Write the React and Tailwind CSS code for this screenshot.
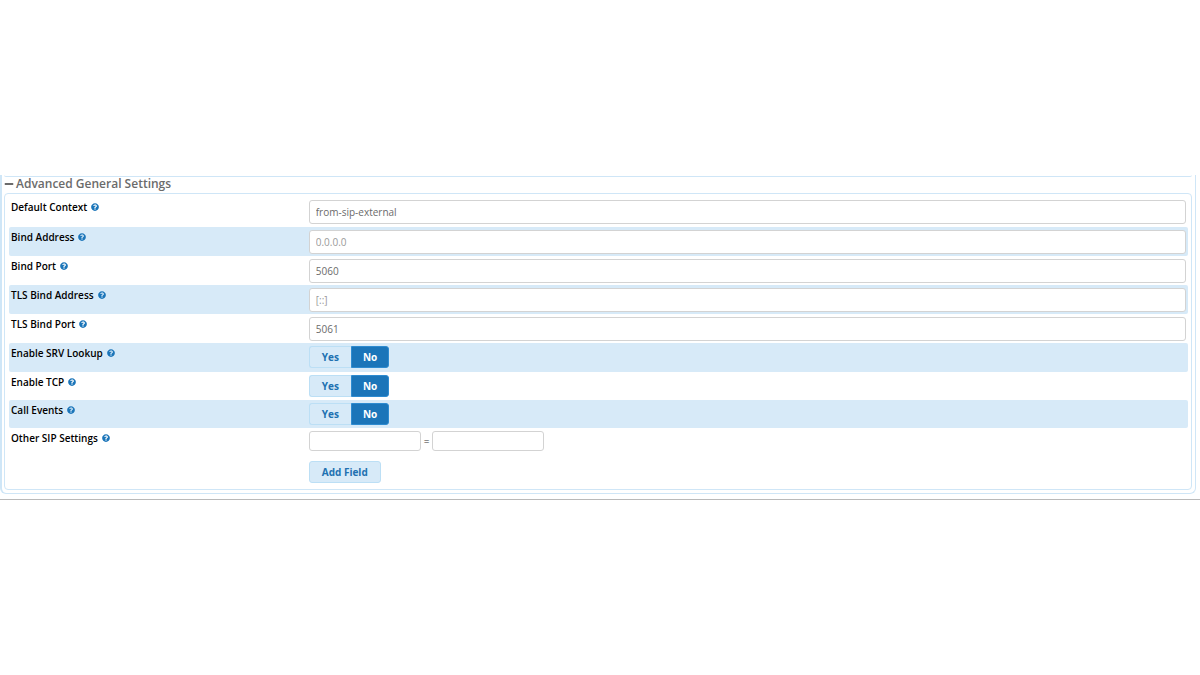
import { useState } from 'react';
import { FaMinus, FaQuestionCircle } from 'react-icons/fa';

const textFields = [
    { id: 'default-context', label: 'Default Context', value: 'from-sip-external' },
    { id: 'bind-address', label: 'Bind Address', placeholder: '0.0.0.0' },
    { id: 'bind-port', label: 'Bind Port', value: '5060' },
    { id: 'tls-bind-address', label: 'TLS Bind Address', placeholder: '[::]' },
    { id: 'tls-bind-port', label: 'TLS Bind Port', value: '5061' },
];

const toggles = [
    { id: 'srv-lookup', label: 'Enable SRV Lookup' },
    { id: 'enable-tcp', label: 'Enable TCP' },
    { id: 'call-events', label: 'Call Events' },
];

const inputStyle = 'rounded-[3px] border border-[#d3d3d3] bg-white text-[10px] text-[#6b6b6b] placeholder:text-[#999999] outline-none';

function Row({ id, label, shaded, children }) {
    return (
        <div className={`flex rounded-[2px] px-[2px] first:pb-px ${shaded ? 'bg-[#d7eaf8]' : ''}`}>
            <div className="flex w-1/4 shrink-0 items-center gap-1 self-start pt-[3px]">
                <label htmlFor={id} id={`${id}-label`} className="text-[10px] leading-[14px] font-semibold text-black">
                    {label}
                </label>
                <FaQuestionCircle className="size-2 text-[#1b75b9]" />
            </div>
            <div className="min-w-0 grow pl-[4px]">{children}</div>
        </div>
    );
}

function YesNo({ id }) {
    const [value, setValue] = useState('No');

    return (
        <div id={id} role="group" aria-labelledby={`${id}-label`} className="flex py-[3px]">
            {['Yes', 'No'].map((option) => (
                <button
                    key={option}
                    type="button"
                    aria-pressed={value === option}
                    onClick={() => setValue(option)}
                    className={`h-[22px] border px-[11px] text-[10px] leading-[14px] font-bold first:rounded-l-[3px] first:border-r-0 first:px-3 last:rounded-r-[3px] ${value === option
                            ? 'border-[#2e8bd0] bg-[#1b75b9] text-white'
                            : 'border-[#bcdff5] bg-[#d7eaf8] text-[#2171b1]'
                        }`}
                >
                    {option}
                </button>
            ))}
        </div>
    );
}

export default function App() {
    const [open, setOpen] = useState(true);

    return (
        <main className="min-h-screen bg-white pt-[175px] font-['Open_Sans',sans-serif]">
            <div className="border-b border-[#b9b9b9] pb-[5px]">
                <div className="mr-1 rounded-b-[6px] border-r border-b border-l-2 border-[#cfe6f7] pr-[3px] pb-[3px] pl-[2px]">
                    <div className="h-[2px] rounded-b-[3px] border-b border-[#cfe6f7]" />
                    <h2>
                        <button
                            type="button"
                            aria-expanded={open}
                            onClick={() => setOpen(!open)}
                            className="flex items-center gap-[2px] pb-[3px] text-[12px] leading-[13px] font-semibold text-[#6b6b6b]"
                        >
                            <FaMinus className="size-[10px]" />
                            Advanced General Settings
                        </button>
                    </h2>
                    {open && (
                        <form className="rounded-[4px] border border-[#cfe6f7] pt-[3px] pr-[3px] pb-[6px] pl-[4px]" onSubmit={(e) => e.preventDefault()}>
                            <div>
                                {textFields.map((field, i) => (
                                    <Row key={field.id} id={field.id} label={field.label} shaded={i % 2 === 1}>
                                        <div className="flex pt-[3px] pb-[2px]">
                                            <input
                                                id={field.id}
                                                type="text"
                                                defaultValue={field.value}
                                                placeholder={field.placeholder}
                                                className={`h-6 w-full px-[6px] ${inputStyle}`}
                                            />
                                        </div>
                                    </Row>
                                ))}
                            </div>
                            <div>
                                {toggles.map((toggle, i) => (
                                    <Row key={toggle.id} id={toggle.id} label={toggle.label} shaded={i % 2 === 0}>
                                        <YesNo id={toggle.id} />
                                    </Row>
                                ))}
                            </div>
                            <Row id="sip-key" label="Other SIP Settings">
                                <div className="flex items-center gap-[3px] pt-[3px] text-[10px] text-[#333333]">
                                    <input id="sip-key" type="text" className={`h-5 w-28 px-1 ${inputStyle}`} />
                                    =
                                    <input type="text" aria-label="Setting value" className={`h-5 w-28 px-1 ${inputStyle}`} />
                                </div>
                                <button
                                    type="button"
                                    className="mt-[10px] block h-[22px] rounded-[3px] border border-[#bcdff5] bg-[#d7eaf8] px-3 text-[10px] leading-[14px] font-bold text-[#2171b1]"
                                >
                                    Add Field
                                </button>
                            </Row>
                        </form>
                    )}
                </div>
            </div>
        </main>
    );
}
